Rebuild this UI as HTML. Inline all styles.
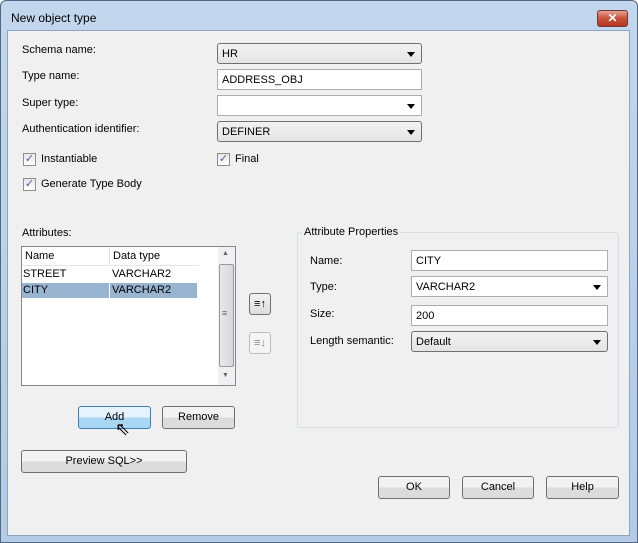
<!DOCTYPE html>
<html><head><style>
*{box-sizing:border-box;margin:0;padding:0}
body{width:638px;height:543px;overflow:hidden;background:#fff;font-family:"Liberation Sans",sans-serif;font-size:11px;color:#000;position:relative}
.win{position:absolute;left:0;top:0;width:638px;height:543px;background:linear-gradient(#c2d7ee,#b3cbe6);border:1px solid #54677e;border-radius:6px 6px 0 0}
.content{position:absolute;left:7px;top:30px;width:623px;height:506px;background:#f0f0f0;border:1px solid #8ea4c0}
.a{position:absolute;white-space:nowrap}
.combo{position:absolute;height:21px;border:1px solid #707070;border-radius:3px;background:linear-gradient(#f2f2f2,#e4e4e4);padding:4px 0 0 4px;font-size:11px}
.combo.w{background:#fff;border-color:#abadb3;border-radius:0}
.combo:after{content:"";position:absolute;right:6px;top:8px;border-left:4px solid transparent;border-right:4px solid transparent;border-top:5px solid #000}
.edit{position:absolute;height:21px;border:1px solid #abadb3;background:#fff;padding:4px 0 0 4px;font-size:11px}
.cb{position:absolute;width:13px;height:13px;border:1px solid #8e8f8f;background:linear-gradient(#e6e6e6,#fff);font-size:11px;line-height:11px;text-align:center;color:#4a5f97}
.btn{position:absolute;height:23px;border:1px solid #707070;border-radius:3px;background:linear-gradient(#f2f2f2 50%,#dcdcdc 50%);text-align:center;line-height:21px;font-size:11px}
</style></head><body>
<div class="win"></div>
<div class="a" style="left:11px;top:11px;font-size:12px">New object type</div>
<div style="position:absolute;left:597px;top:10px;width:31px;height:17px;border:1px solid #6d3a33;border-radius:3px;background:linear-gradient(#e8a193,#c7513b 50%,#b5371f);color:#fff;font-weight:bold;text-align:center;line-height:15px;font-size:12px">✕</div>
<div class="content"></div>
<div class="a" style="left:22px;top:44px">Schema name:</div>
<div class="combo" style="left:217px;top:43px;width:205px">HR</div>
<div class="a" style="left:22px;top:70px">Type name:</div>
<div class="edit" style="left:217px;top:69px;width:205px">ADDRESS_OBJ</div>
<div class="a" style="left:22px;top:97px">Super type:</div>
<div class="combo w" style="left:217px;top:95px;width:205px"></div>
<div class="a" style="left:22px;top:123px">Authentication identifier:</div>
<div class="combo" style="left:217px;top:121px;width:205px">DEFINER</div>
<div class="cb" style="left:23px;top:153px">✓</div><div class="a" style="left:41px;top:153px">Instantiable</div>
<div class="cb" style="left:217px;top:153px">✓</div><div class="a" style="left:235px;top:153px">Final</div>
<div class="cb" style="left:23px;top:178px">✓</div><div class="a" style="left:41px;top:178px">Generate Type Body</div>
<div class="a" style="left:22px;top:227px">Attributes:</div>
<div style="position:absolute;left:21px;top:246px;width:215px;height:140px;border:1px solid #828790;background:#fff"></div>
<div style="position:absolute;left:22px;top:247px;width:176px;height:19px;background:#fff;border-bottom:1px solid #e5e5e5"></div>
<div style="position:absolute;left:109px;top:248px;width:1px;height:17px;background:#ddd"></div>
<div class="a" style="left:25px;top:250px">Name</div><div class="a" style="left:113px;top:250px">Data type</div>
<div class="a" style="left:23px;top:268px">STREET</div><div class="a" style="left:112px;top:268px">VARCHAR2</div>
<div style="position:absolute;left:22px;top:283px;width:175px;height:15px;background:#99b4d1"></div>
<div style="position:absolute;left:109px;top:283px;width:1px;height:15px;background:#fff"></div>
<div class="a" style="left:23px;top:284px">CITY</div><div class="a" style="left:112px;top:284px">VARCHAR2</div>
<div style="position:absolute;left:218px;top:247px;width:17px;height:138px;background:#f0f0f0"></div>
<div style="position:absolute;left:219px;top:264px;width:15px;height:103px;border:1px solid #999;border-radius:2px;background:linear-gradient(90deg,#e8e8e8,#d8d8d8)"></div>
<div class="a" style="left:222px;top:250px;font-size:7px;color:#666">▲</div>
<div class="a" style="left:222px;top:372px;font-size:7px;color:#666">▼</div>
<div class="a" style="left:222px;top:308px;font-size:9px;color:#666">≡</div>
<div style="position:absolute;left:249px;top:293px;width:22px;height:22px;border:1px solid #707070;border-radius:3px;background:linear-gradient(#f2f2f2,#dcdcdc);font-size:11px;text-align:center;line-height:20px;font-weight:bold">≡↑</div>
<div style="position:absolute;left:249px;top:332px;width:22px;height:22px;border:1px solid #bbb;border-radius:3px;background:#f4f4f4;font-size:11px;text-align:center;line-height:20px;color:#888">≡↓</div>
<div class="btn" style="left:78px;top:406px;width:73px;border-color:#3c7fb1;background:linear-gradient(#e5f4fc 50%,#a9d6f2 50%)">Add</div>
<div class="btn" style="left:162px;top:406px;width:73px">Remove</div>
<div class="a" style="left:115px;top:420px;font-size:18px;line-height:18px">⇖</div>
<div class="btn" style="left:21px;top:450px;width:166px">Preview SQL&gt;&gt;</div>
<div style="position:absolute;left:297px;top:232px;width:322px;height:196px;border:1px solid #d5dfe5;border-radius:3px"></div>
<div class="a" style="left:302px;top:226px;background:#f0f0f0;padding:0 2px">Attribute Properties</div>
<div class="a" style="left:310px;top:255px">Name:</div>
<div class="edit" style="left:411px;top:250px;width:197px">CITY</div>
<div class="a" style="left:310px;top:281px">Type:</div>
<div class="combo w" style="left:411px;top:276px;width:197px">VARCHAR2</div>
<div class="a" style="left:310px;top:308px">Size:</div>
<div class="edit" style="left:411px;top:305px;width:197px">200</div>
<div class="a" style="left:310px;top:335px">Length semantic:</div>
<div class="combo" style="left:411px;top:331px;width:197px">Default</div>
<div class="btn" style="left:378px;top:476px;width:72px">OK</div>
<div class="btn" style="left:462px;top:476px;width:72px">Cancel</div>
<div class="btn" style="left:546px;top:476px;width:73px">Help</div>
</body></html>
